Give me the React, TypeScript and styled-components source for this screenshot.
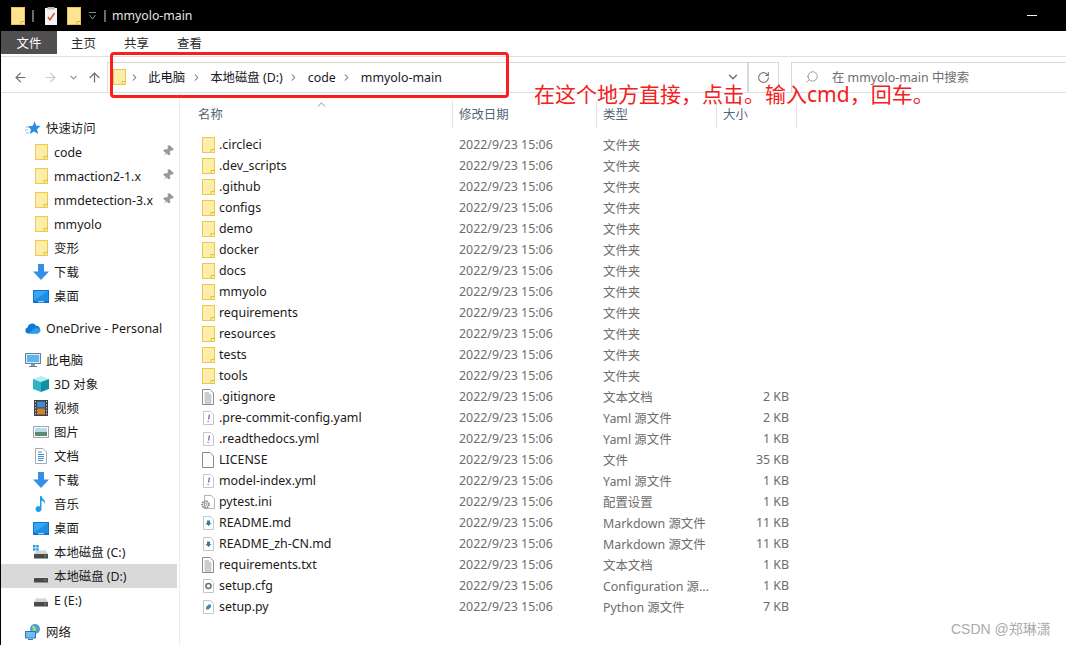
import React from "react";
import styled, { createGlobalStyle } from "styled-components";
import { ArrowLeft, ArrowRight, ArrowUp, ChevronDown, ChevronRight, ChevronUp, RotateCw, Search, Pin } from "lucide-react";

const Global = createGlobalStyle`
  html, body { margin: 0; padding: 0; background: #fff; }
  body { font-family: "Noto Sans", "Noto Sans CJK SC", sans-serif; font-size: 12.4px; color: #1a1a1a; }
`;

const Win = styled.div`
  position: relative; width: 1066px; height: 645px; overflow: hidden; background: #fff;
  display: flex; flex-direction: column; border-left: 1px solid #000; box-sizing: border-box;
`;
const TitleBar = styled.div`
  height: 31px; flex: none; background: #000; display: flex; align-items: center; padding-left: 10px; color: #e4e4e4; font-size: 12.3px;
`;
const TitleSep = styled.span<{ $l: number; $r: number }>`
  width: 2px; height: 12px; background: #6a6a6a; flex: none; margin: 0 ${(p) => p.$r}px 0 ${(p) => p.$l}px;
`;
const TitleIcon = styled.span<{ $m: number }>` display: flex; margin-right: ${(p) => p.$m}px; `;
const TitleSpacer = styled.span` flex: 1; `;
const Minimize = styled.span` width: 10px; height: 1px; background: #fff; margin-right: 29px; `;
const Ribbon = styled.div`
  height: 25px; flex: none; display: flex; align-items: flex-start; border-bottom: 1px solid #dfdfdf; color: #2b2b2b;
`;
const FileTab = styled.div`
  width: 56px; height: 23px; background: #505050; color: #fff; display: flex; align-items: center; justify-content: center;
`;
const RibbonTab = styled.div`
  width: 53px; height: 23px; display: flex; align-items: center; justify-content: center;
`;
const AddressRow = styled.div`
  height: 35px; flex: none; display: flex; align-items: flex-end; border-bottom: 1px solid #dfdfdf; box-sizing: content-box;
`;
const NavButtons = styled.div` width: 106px; height: 30px; display: flex; align-items: center; color: #6d6d6d; flex: none; `;
const NavBtn = styled.span<{ $w: number; $c?: string }>` width: ${(p) => p.$w}px; display: flex; justify-content: center; color: ${(p) => p.$c || "#6d6d6d"}; `;
const AddressBox = styled.div`
  width: 641px; height: 30px; flex: none; box-sizing: border-box; border: 1px solid #d9d9d9; border-bottom: none; display: flex; align-items: center; padding: 0 0 1px 5px;
`;
const Crumb = styled.span` color: #1a1a1a; white-space: nowrap; `;
const CrumbFolder = styled.span` display: flex; margin-right: -3px; `;
const Chev = styled.span` display: flex; width: 22px; padding-right: 3px; justify-content: center; color: #6d6d6d; flex: none; `;
const AddressEnd = styled.span` margin-left: auto; width: 28px; display: flex; justify-content: center; color: #6d6d6d; `;
const Refresh = styled.div`
  width: 31px; height: 30px; box-sizing: border-box; border: 1px solid #d9d9d9; border-bottom: none; flex: none; display: flex; align-items: center; justify-content: center; color: #777;
`;
const SearchBox = styled.div`
  margin-left: 12px; flex: 1; height: 30px; box-sizing: border-box; border: 1px solid #d9d9d9; border-bottom: none; border-right: none; display: flex; align-items: center; padding: 0 0 1px 13px; gap: 13px; color: #6d6d6d; white-space: nowrap;
`;
const Glass = styled.span` display: flex; transform: scaleX(-1); color: #7d7d7d; `;
const Body = styled.div` flex: 1; display: flex; min-height: 0; `;
const Nav = styled.nav`
  width: 179px; flex: none; box-sizing: border-box; border-right: 1px solid #ececec; padding: 23px 2px 0 0;
`;
const NavRow = styled.div<{ $child?: boolean; $sel?: boolean; $gap?: boolean }>`
  height: 24px; display: flex; align-items: center; position: relative; white-space: nowrap; color: #1a1a1a;
  margin-top: ${(p) => (p.$gap ? 8 : 0)}px;
  padding-left: ${(p) => (p.$child ? 32 : 24)}px; background: ${(p) => (p.$sel ? "#d9d9d9" : "transparent")};
`;
const NavIcon = styled.span` width: 16px; height: 16px; display: flex; margin-right: 5px; flex: none; align-items: center; justify-content: center; `;
const PinSlot = styled.span` position: absolute; right: 3px; top: 5px; display: flex; color: #8a8a8a; transform: rotate(40deg); `;
const Main = styled.main` flex: 1; display: flex; flex-direction: column; position: relative; `;
const HeaderRow = styled.div`
  height: 41px; flex: none; display: grid; grid-template-columns: 273px 144px 120px 80px; align-items: start; padding-top: 8px; box-sizing: border-box; color: #56657a;
`;
const HeadCell = styled.div<{ $pl: number }>`
  height: 27px; padding-left: ${(p) => p.$pl}px; box-sizing: border-box; border-right: 1px solid #e3e3e3; display: flex; align-items: center; padding-bottom: 2px;
`;
const SortMark = styled.span` position: absolute; left: 135px; top: 5px; color: #777; display: flex; `;
const Row = styled.div`
  height: 21px; display: grid; grid-template-columns: 273px 144px 120px 80px; align-items: center; white-space: nowrap;
`;
const NameCell = styled.div` display: flex; align-items: center; padding-left: 20px; color: #1a1a1a; `;
const FileIcon = styled.span` width: 16px; height: 16px; display: flex; margin-right: 3px; flex: none; justify-content: center; align-items: center; `;
const Muted = styled.div` color: #6d6d6d; padding-left: 6px; `;
const SizeCell = styled.div` color: #6d6d6d; text-align: right; padding-right: 8px; `;
const RedBox = styled.div`
  position: absolute; left: 109px; top: 52px; width: 399px; height: 46px; box-sizing: border-box; border: 3px solid #fb1e1e; border-radius: 4px;
`;
const Note = styled.div`
  position: absolute; left: 533px; top: 84px; font-size: 21px; line-height: 20px; color: #f42020; white-space: nowrap;
`;
const Mark = styled.div`
  position: absolute; left: 950px; top: 620px; font-size: 14px; line-height: 18px; color: #ababab; white-space: nowrap;
  font-family: "Liberation Sans", "Noto Sans CJK SC", sans-serif;
`;

const Folder = () => (
  <svg width="13" height="16" viewBox="0 0 13 16">
    <rect x=".5" y=".5" width="12" height="15" fill="#fdeea6" stroke="#ebc94f" />
    <rect x="1" y="1" width="4" height="14" fill="#ffeeb0" />
    <path d="M9 15V12.500H12.500" fill="none" stroke="#e3bd3d" />
  </svg>
);
const Star = () => (
  <svg width="16" height="16" viewBox="0 0 16 16">
    <path d="M9.800 1 11 5.600 15.500 6 12 9.200 13.200 14 9 11.400 4.800 14 6 9.200 2.500 6.400 7.800 5.800Z" fill="#2f8de0" />
    <path d="M.5 7H4M0 10H3M1 13H4" stroke="#8cc3ee" />
  </svg>
);
const Download = () => (
  <svg width="16" height="16" viewBox="0 0 16 16">
    <path d="M5 0H11V7.500H16L8 16 0 7.500H5Z" fill="#358fe3" />
  </svg>
);
const Desktop = () => (
  <svg width="16" height="13" viewBox="0 0 16 13">
    <rect width="16" height="13" fill="#0c74c9" />
    <rect x="1" y="1" width="14" height="9.500" fill="#38a4f2" />
    <path d="M1 10.500 15 1V10.500Z" fill="#1a8fe6" />
    <path d="M5 11.700H11" stroke="#cfe7fa" />
  </svg>
);
const Cloud = () => (
  <svg width="16" height="12" viewBox="0 0 16 12">
    <path d="M3 11.500A3 3 0 0 1 2.600 5.600 4.600 4.600 0 0 1 11 3.700 3.900 3.900 0 0 1 15 7.500 3.600 3.600 0 0 1 12.500 11.500Z" fill="#0f78d4" />
    <path d="M3.500 11.500 8 7.500 12 5.500 16 8.500 13 11.500Z" fill="#2c9cec" />
  </svg>
);
const Pc = () => (
  <svg width="16" height="16" viewBox="0 0 16 16">
    <rect x=".5" y="1.500" width="15" height="10" fill="#d6eefc" stroke="#6e8294" />
    <rect x="2" y="3" width="12" height="7" fill="#5fb7ef" />
    <path d="M6 12H10V14H6Z" fill="#8a9aa8" />
    <path d="M4 14.500H12" stroke="#6e8294" />
  </svg>
);
const Cube = () => (
  <svg width="16" height="16" viewBox="0 0 16 16">
    <path d="M8 0 16 3 8 6 0 3Z" fill="#b8eef0" />
    <path d="M0 3 8 6V16L0 13Z" fill="#2fb4c6" />
    <path d="M16 3 8 6V16L16 13Z" fill="#128fa6" />
  </svg>
);
const Film = () => (
  <svg width="14" height="16" viewBox="0 0 14 16">
    <rect width="14" height="16" fill="#3b3f46" />
    <rect x="3" y="1.500" width="8" height="6" fill="#3f8bd0" />
    <rect x="3" y="8.500" width="8" height="6" fill="#d4822a" />
    <path d="M1.500 1V15M12.500 1V15" stroke="#b9bec4" strokeDasharray="1.500 1.500" />
  </svg>
);
const Picture = () => (
  <svg width="16" height="12" viewBox="0 0 16 12">
    <rect x=".5" y=".5" width="15" height="11" fill="#fff" stroke="#a5a5a5" />
    <rect x="2" y="2" width="12" height="4" fill="#b7dcee" />
    <rect x="2" y="6" width="12" height="4" fill="#5c8a72" />
  </svg>
);
const Doc = () => (
  <svg width="12" height="16" viewBox="0 0 12 16">
    <path d="M.5.5H8L11.500 4V15.500H.5Z" fill="#fff" stroke="#a9a9a9" />
    <path d="M3 4H7M3 6.500H9M3 8.500H9M3 10.500H9M3 12.500H8" stroke="#3c8fd0" />
  </svg>
);
const Music = () => (
  <svg width="12" height="16" viewBox="0 0 12 16">
    <path d="M5 0H6.500C7 3 11 4 10 8 9.300 5.800 8 5 6.500 4.800V13A3 3 0 1 1 5 10.400Z" fill="#1a9ff0" />
  </svg>
);
const Drive = ({ win, dim }: { win?: boolean; dim?: boolean }) => (
  <svg width="16" height="16" viewBox="0 0 16 16">
    {win && <path d="M0 1H2.500V3.500H0ZM3.200 1H5.700V3.500H3.200ZM0 4.200H2.500V6.700H0ZM3.200 4.200H5.700V6.700H3.200Z" fill="#1e9be8" />}
    {!dim && <path d="M3 6.500H13L15 10H1Z" fill="#d4d4d4" />}
    {dim && <path d="M3 8.500H13L15 10H1Z" fill="#e0e0e0" />}
    <rect x="1" y="10" width="14" height="4.500" rx=".5" fill="#4a4a4a" />
    <path d="M11.500 12H13" stroke="#4ade5a" />
  </svg>
);
const Network = () => (
  <svg width="16" height="16" viewBox="0 0 16 16">
    <circle cx="10" cy="5" r="5" fill="#4d9fd6" />
    <path d="M7 2C9 1 12 4 11 7L8 8Z" fill="#9fd48c" />
    <rect x=".5" y="7.500" width="10" height="6.500" fill="#6fc0f2" stroke="#2f78b5" />
    <path d="M3 15.500H8" stroke="#2f78b5" />
  </svg>
);
const TextFile = () => (
  <svg width="12" height="16" viewBox="0 0 12 16">
    <path d="M.5.5H8L11.500 4V15.500H.5Z" fill="#fff" stroke="#8c8c8c" />
    <path d="M2.500 4H7M2.500 6H9.500M2.500 8H9.500M2.500 10H9.500M2.500 12H9.500M2.500 14H9.500" stroke="#9a9a9a" />
  </svg>
);
const BlankFile = () => (
  <svg width="12" height="16" viewBox="0 0 12 16">
    <path d="M.5.500H8L11.500 4V15.500H.5Z" fill="#fcfcfc" stroke="#8c8c8c" />
  </svg>
);
const SmallPage = ({ children }: { children?: React.ReactNode }) => (
  <svg width="11" height="14" viewBox="0 0 11 14">
    <path d="M.5.500H7.500L10.500 3.500V13.500H.5Z" fill="#fff" stroke="#c6c6c6" />
    {children}
  </svg>
);
const Yaml = () => (
  <SmallPage>
    <path d="M6.500 3.500 5.500 8.500" stroke="#8a63b8" strokeWidth="1.300" />
    <path d="M5.200 10 5 11" stroke="#8a63b8" strokeWidth="1.300" />
  </SmallPage>
);
const Md = () => (
  <SmallPage>
    <path d="M4 4.500H7V7H8.500L5.500 10 2.500 7H4Z" fill="#2f7fa8" />
  </SmallPage>
);
const Cfg = () => (
  <SmallPage>
    <circle cx="5.500" cy="7" r="2.500" fill="none" stroke="#68727c" strokeWidth="1.600" />
  </SmallPage>
);
const Py = () => (
  <SmallPage>
    <path d="M3 7 5.500 4.500H8V7ZM8 7 5.500 9.500H3V7Z" fill="#3c8fb4" />
  </SmallPage>
);
const Ini = () => (
  <svg width="16" height="16" viewBox="0 0 16 16">
    <path d="M4.500 1.500H11L14.500 4.500V14.500H4.500Z" fill="#fff" stroke="#b5b5b5" />
    <circle cx="5.500" cy="10.500" r="3.300" fill="none" stroke="#8a8a8a" strokeWidth="2" strokeDasharray="1.500 .8" />
    <circle cx="5.500" cy="10.500" r="1.300" fill="none" stroke="#9a9a9a" />
  </svg>
);
const Notepad = () => (
  <svg width="12" height="18" viewBox="0 0 12 18">
    <rect x="0" y="1" width="12" height="17" fill="#f4f4f4" />
    <rect x="2.500" y="0" width="7" height="2.500" fill="#bdbdbd" />
    <path d="M3 10 5 13 9.500 6" fill="none" stroke="#e0522a" strokeWidth="1.500" />
  </svg>
);
const TitleFolder = () => (
  <svg width="14" height="18" viewBox="0 0 14 18">
    <rect x=".5" y=".5" width="13" height="17" fill="#fde592" stroke="#eac64e" />
    <path d="M10 17.500V14.500H13.500" fill="none" stroke="#d8b13a" />
  </svg>
);
const QuickCaret = () => (
  <svg width="9" height="8" viewBox="0 0 9 8">
    <path d="M1 .5H8M1.500 3 4.500 7 7.500 3" fill="none" stroke="#8a8a8a" />
  </svg>
);

const quick: [string, React.ReactNode, boolean][] = [
  ["code", <Folder />, true], ["mmaction2-1.x", <Folder />, true], ["mmdetection-3.x", <Folder />, true],
  ["mmyolo", <Folder />, false], ["变形", <Folder />, false], ["下载", <Download />, false], ["桌面", <Desktop />, false],
];
const pc: [string, React.ReactNode, boolean?][] = [
  ["3D 对象", <Cube />], ["视频", <Film />], ["图片", <Picture />], ["文档", <Doc />], ["下载", <Download />],
  ["音乐", <Music />], ["桌面", <Desktop />], ["本地磁盘 (C:)", <Drive win />], ["本地磁盘 (D:)", <Drive dim />, true], ["E (E:)", <Drive />],
];
const dirs = [".circleci", ".dev_scripts", ".github", "configs", "demo", "docker", "docs", "mmyolo", "requirements", "resources", "tests", "tools"];
const files: [string, React.ReactNode, string, string][] = [
  [".gitignore", <TextFile />, "文本文档", "2 KB"],
  [".pre-commit-config.yaml", <Yaml />, "Yaml 源文件", "2 KB"],
  [".readthedocs.yml", <Yaml />, "Yaml 源文件", "1 KB"],
  ["LICENSE", <BlankFile />, "文件", "35 KB"],
  ["model-index.yml", <Yaml />, "Yaml 源文件", "1 KB"],
  ["pytest.ini", <Ini />, "配置设置", "1 KB"],
  ["README.md", <Md />, "Markdown 源文件", "11 KB"],
  ["README_zh-CN.md", <Md />, "Markdown 源文件", "11 KB"],
  ["requirements.txt", <TextFile />, "文本文档", "1 KB"],
  ["setup.cfg", <Cfg />, "Configuration 源...", "1 KB"],
  ["setup.py", <Py />, "Python 源文件", "7 KB"],
];
const crumbs = ["此电脑", "本地磁盘 (D:)", "code", "mmyolo-main"];

export default function App() {
  return (
    <Win>
      <Global />
      <TitleBar>
        <TitleFolder />
        <TitleSep $l={7} $r={11} />
        <TitleIcon $m={10}><Notepad /></TitleIcon>
        <TitleIcon $m={7}><TitleFolder /></TitleIcon>
        <TitleIcon $m={0}><QuickCaret /></TitleIcon>
        <TitleSep $l={7} $r={6} />
        <span>mmyolo-main</span>
        <TitleSpacer />
        <Minimize />
      </TitleBar>
      <Ribbon>
        <FileTab>文件</FileTab>
        <RibbonTab>主页</RibbonTab>
        <RibbonTab>共享</RibbonTab>
        <RibbonTab>查看</RibbonTab>
      </Ribbon>
      <AddressRow>
        <NavButtons>
          <NavBtn $w={38}><ArrowLeft size={15} strokeWidth={1.800} /></NavBtn>
          <NavBtn $w={22} $c="#c9c9c9"><ArrowRight size={15} strokeWidth={1.800} /></NavBtn>
          <NavBtn $w={24} $c="#8a8a8a"><ChevronDown size={11} strokeWidth={2.200} /></NavBtn>
          <NavBtn $w={18}><ArrowUp size={15} strokeWidth={2} /></NavBtn>
        </NavButtons>
        <AddressBox>
          <CrumbFolder><Folder /></CrumbFolder>
          {crumbs.map((c) => (
            <React.Fragment key={c}>
              <Chev><ChevronRight size={11} strokeWidth={2.200} /></Chev>
              <Crumb>{c}</Crumb>
            </React.Fragment>
          ))}
          <AddressEnd><ChevronDown size={14} strokeWidth={2.400} /></AddressEnd>
        </AddressBox>
        <Refresh><RotateCw size={13} strokeWidth={2} /></Refresh>
        <SearchBox>
          <Glass><Search size={14} strokeWidth={1.300} /></Glass>
          在 mmyolo-main 中搜索
        </SearchBox>
      </AddressRow>
      <Body>
        <Nav>
          <NavRow><NavIcon><Star /></NavIcon>快速访问</NavRow>
          {quick.map(([t, ic, pin]) => (
            <NavRow $child key={t}>
              <NavIcon>{ic}</NavIcon>{t}
              {pin && <PinSlot><Pin size={12} fill="#9a9a9a" strokeWidth={1.500} /></PinSlot>}
            </NavRow>
          ))}
          <NavRow $gap><NavIcon><Cloud /></NavIcon>OneDrive - Personal</NavRow>
          <NavRow $gap><NavIcon><Pc /></NavIcon>此电脑</NavRow>
          {pc.map(([t, ic, sel]) => (
            <NavRow $child $sel={sel} key={t + String(sel)}><NavIcon>{ic}</NavIcon>{t}</NavRow>
          ))}
          <NavRow $gap><NavIcon><Network /></NavIcon>网络</NavRow>
        </Nav>
        <Main>
          <SortMark><ChevronUp size={13} strokeWidth={1.500} /></SortMark>
          <HeaderRow>
            <HeadCell $pl={18}>名称</HeadCell>
            <HeadCell $pl={6}>修改日期</HeadCell>
            <HeadCell $pl={6}>类型</HeadCell>
            <HeadCell $pl={6}>大小</HeadCell>
          </HeaderRow>
          {dirs.map((d) => (
            <Row key={d}>
              <NameCell><FileIcon><Folder /></FileIcon>{d}</NameCell>
              <Muted>2022/9/23 15:06</Muted>
              <Muted>文件夹</Muted>
              <SizeCell />
            </Row>
          ))}
          {files.map(([n, ic, t, s]) => (
            <Row key={n}>
              <NameCell><FileIcon>{ic}</FileIcon>{n}</NameCell>
              <Muted>2022/9/23 15:06</Muted>
              <Muted>{t}</Muted>
              <SizeCell>{s}</SizeCell>
            </Row>
          ))}
        </Main>
      </Body>
      <RedBox />
      <Note>在这个地方直接，点击。输入cmd，回车。</Note>
      <Mark>CSDN @郑琳潇</Mark>
    </Win>
  );
}
